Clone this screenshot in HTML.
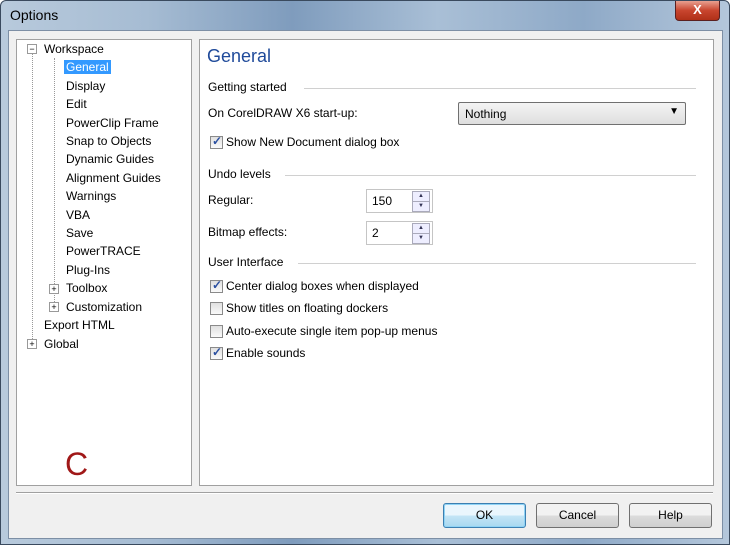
<!DOCTYPE html>
<html><head><style>
body{margin:0;width:730px;height:545px;overflow:hidden;font-family:"Liberation Sans",sans-serif;font-size:12px;color:#000;background:#fff}
.win{position:absolute;left:0;top:0;width:728px;height:543px;border:1px solid #3a4a5e;border-radius:6px 6px 0 0;background:linear-gradient(90deg,#b8cadc 0%,#a6bcd3 20%,#7f9cbd 40%,#a9bfd6 60%,#8ea9c7 80%,#b4c7db 100%)}
.title{position:absolute;left:9px;top:6px;font-size:14px;color:#000}
.close{position:absolute;left:674px;top:0;width:43px;height:19px;border:1px solid #5a2020;border-top:none;border-radius:0 0 4px 4px;background:linear-gradient(#e8a090,#c8452e 50%,#b03018);color:#fff;font-weight:bold;text-align:center;font-size:13px;line-height:18px}
.client{position:absolute;left:8px;top:30px;width:713px;height:507px;background:#f0f0f0;border:1px solid #7d8fa5}
.panel{position:absolute;background:#fff;border:1px solid #a0a0a0}
.a{position:absolute;white-space:nowrap}
.hd{position:absolute;height:1px;background:#d0d0d0}
.cb{position:absolute;width:11px;height:11px;border:1px solid #8a8a8a;background:linear-gradient(#e0e0e0,#fafafa)}
.cb.on::after{content:"✓";position:absolute;left:1px;top:-3px;color:#2a4fa0;font-weight:bold;font-size:12px}
.btn{position:absolute;top:503px;height:23px;width:81px;border:1px solid #707070;border-radius:3px;background:linear-gradient(#f2f2f2 50%,#dcdcdc 50%,#cfcfcf);text-align:center;line-height:23px}
.spin{position:absolute;width:65px;height:22px;border:1px solid #c5c5c5;background:#fff}
.spin b{position:absolute;right:2px;width:16px;height:9px;border:1px solid #aab;background:#eef;font-size:6px;text-align:center;line-height:9px;color:#335;font-weight:normal}
.pm{position:absolute;width:8px;height:8px;border:1px solid #999;background:#fff;font-size:9px;line-height:8px;text-align:center}
</style></head><body>
<div class="win">
<div class="title">Options</div>
<div class="close">X</div>
</div>
<div class="client"></div>
<div class="panel" style="left:16px;top:39px;width:174px;height:445px"></div>
<div class="panel" style="left:199px;top:39px;width:513px;height:445px"></div>
<!-- tree lines -->
<div style="position:absolute;left:32px;top:53px;width:0;height:292px;border-left:1px dotted #999"></div>
<div style="position:absolute;left:54px;top:58px;width:0;height:250px;border-left:1px dotted #999"></div>
<div class="pm" style="left:27px;top:44px">−</div>
<div class="pm" style="left:49px;top:284px">+</div>
<div class="pm" style="left:49px;top:302px">+</div>
<div class="pm" style="left:27px;top:339px">+</div>
<div class="a" style="left:44px;top:42px">Workspace</div>
<div class="a" style="left:64px;top:60px;background:#3399ff;color:#fff;padding:0 2px">General</div>
<div class="a" style="left:66px;top:79px">Display</div>
<div class="a" style="left:66px;top:97px">Edit</div>
<div class="a" style="left:66px;top:116px">PowerClip Frame</div>
<div class="a" style="left:66px;top:134px">Snap to Objects</div>
<div class="a" style="left:66px;top:152px">Dynamic Guides</div>
<div class="a" style="left:66px;top:171px">Alignment Guides</div>
<div class="a" style="left:66px;top:189px">Warnings</div>
<div class="a" style="left:66px;top:208px">VBA</div>
<div class="a" style="left:66px;top:226px">Save</div>
<div class="a" style="left:66px;top:244px">PowerTRACE</div>
<div class="a" style="left:66px;top:263px">Plug-Ins</div>
<div class="a" style="left:66px;top:281px">Toolbox</div>
<div class="a" style="left:66px;top:300px">Customization</div>
<div class="a" style="left:44px;top:318px">Export HTML</div>
<div class="a" style="left:44px;top:337px">Global</div>
<div class="a" style="left:65px;top:446px;color:#a01818;font-size:32px">C</div>
<!-- right -->
<div class="a" style="left:207px;top:46px;font-size:18px;color:#1f4a9a">General</div>
<div class="a" style="left:208px;top:80px">Getting started</div><div class="hd" style="left:304px;top:88px;width:392px"></div>
<div class="a" style="left:208px;top:106px">On CorelDRAW X6 start-up:</div>
<div style="position:absolute;left:458px;top:102px;width:226px;height:21px;border:1px solid #707070;border-radius:2px;background:linear-gradient(#f4f4f4,#dedede)"><span class="a" style="left:6px;top:4px">Nothing</span><span class="a" style="right:6px;top:3px;font-size:10px">▼</span></div>
<div class="cb on" style="left:210px;top:136px"></div><div class="a" style="left:226px;top:135px">Show New Document dialog box</div>
<div class="a" style="left:208px;top:167px">Undo levels</div><div class="hd" style="left:285px;top:175px;width:411px"></div>
<div class="a" style="left:208px;top:193px">Regular:</div>
<div class="spin" style="left:366px;top:189px"><span class="a" style="left:5px;top:4px">150</span><b style="top:1px">▲</b><b style="top:11px">▼</b></div>
<div class="a" style="left:208px;top:225px">Bitmap effects:</div>
<div class="spin" style="left:366px;top:221px"><span class="a" style="left:5px;top:4px">2</span><b style="top:1px">▲</b><b style="top:11px">▼</b></div>
<div class="a" style="left:208px;top:255px">User Interface</div><div class="hd" style="left:298px;top:263px;width:398px"></div>
<div class="cb on" style="left:210px;top:280px"></div><div class="a" style="left:226px;top:279px">Center dialog boxes when displayed</div>
<div class="cb" style="left:210px;top:302px"></div><div class="a" style="left:226px;top:301px">Show titles on floating dockers</div>
<div class="cb" style="left:210px;top:325px"></div><div class="a" style="left:226px;top:324px">Auto-execute single item pop-up menus</div>
<div class="cb on" style="left:210px;top:347px"></div><div class="a" style="left:226px;top:346px">Enable sounds</div>
<div style="position:absolute;left:16px;top:492px;width:697px;height:1px;background:#a0a0a0;border-bottom:1px solid #fff"></div>
<div class="btn" style="left:443px;border-color:#3c7fb1;background:linear-gradient(#eaf6fd 50%,#c4e5f6 50%,#a8d8f0);box-shadow:inset 0 0 0 1px #8fd3f5">OK</div>
<div class="btn" style="left:536px">Cancel</div>
<div class="btn" style="left:629px">Help</div>
</body></html>
